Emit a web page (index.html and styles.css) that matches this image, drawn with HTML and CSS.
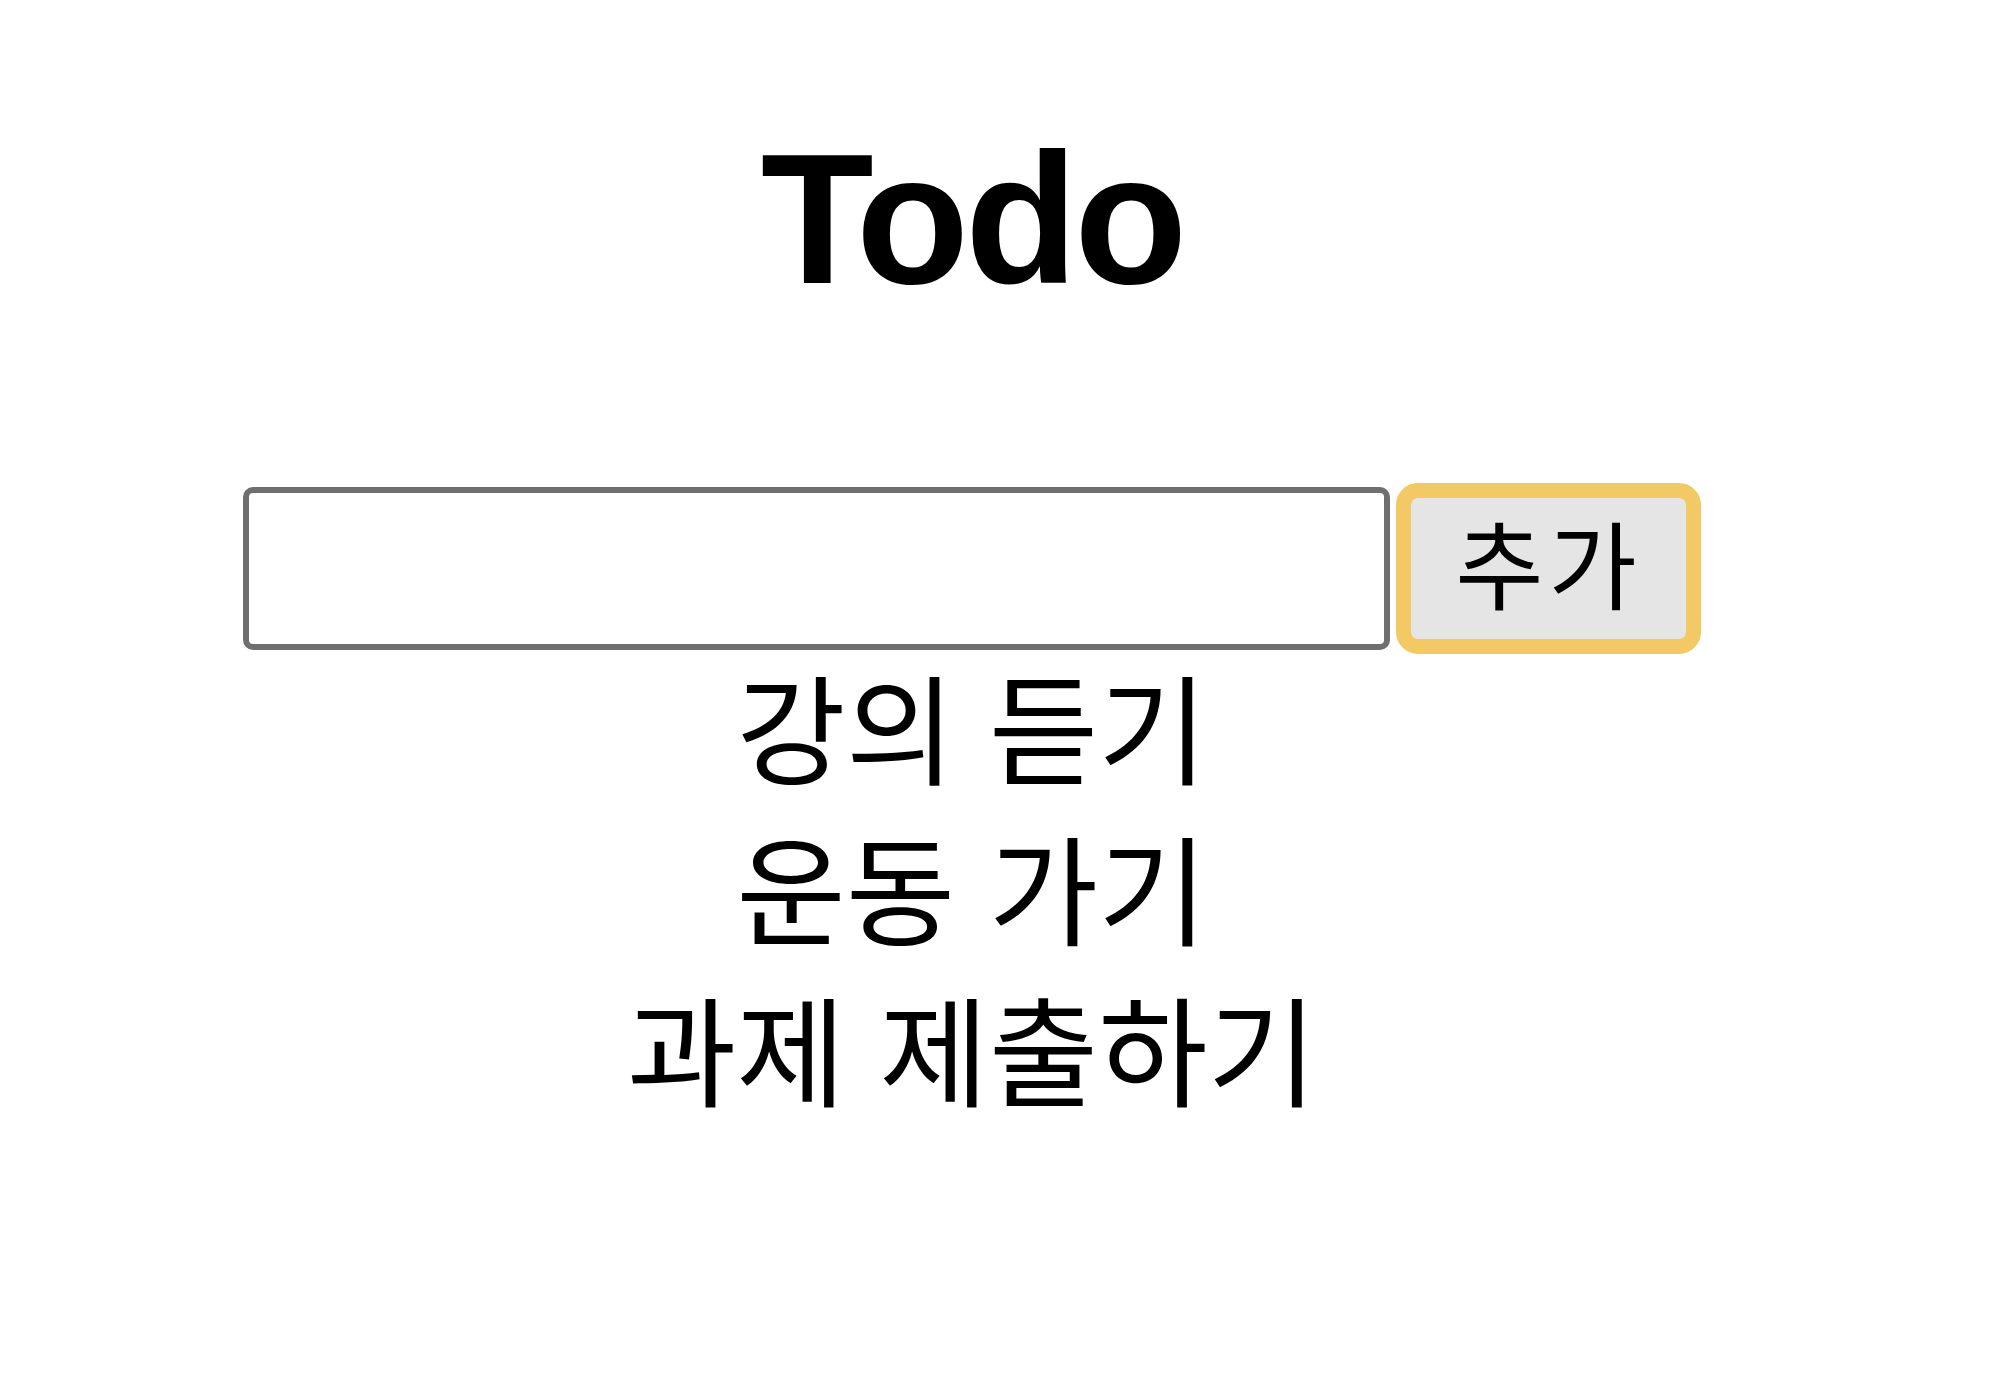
FILE: index.html
```html
<!DOCTYPE html>
<html lang="ko">
<head>
<meta charset="utf-8">
<title>Todo</title>
<link rel="stylesheet" href="styles.css">
</head>
<body>
<div class="app">
  <h1 class="title">Todo</h1>
  <form class="form">
    <input class="field" type="text">
    <button class="add" type="button">추가</button>
  </form>
  <ul class="list">
    <li class="item">강의 듣기</li>
    <li class="item">운동 가기</li>
    <li class="item">과제 제출하기</li>
  </ul>
</div>
</body>
</html>
```
FILE: styles.css
```css
html, body {
  margin: 0;
  padding: 0;
  background: #ffffff;
}
body {
  font-family: "Noto Sans CJK KR", "Noto Sans", sans-serif;
  color: #000000;
}
.app {
  width: 1944px;
  display: flex;
  flex-direction: column;
  align-items: center;
  padding-top: 112px;
}
.title {
  margin: 0;
  font-family: "Liberation Sans", Arial, sans-serif;
  font-weight: 700;
  font-size: 185px;
  line-height: 215px;
  letter-spacing: -4px;
}
.form {
  display: flex;
  align-items: center;
  gap: 6px;
  margin: 156px 0 0 0;
}
.field {
  box-sizing: border-box;
  width: 1147px;
  height: 163px;
  border: 6px solid #6f6f6f;
  border-radius: 10px;
  background: #ffffff;
  padding: 0 20px;
  outline: none;
  font-size: 100px;
}
.add {
  box-sizing: border-box;
  width: 305px;
  height: 171px;
  border: 15px solid #f3c966;
  border-radius: 22px;
  background: #e5e5e5;
  padding: 0 0 16px 0;
  font-family: "Noto Sans CJK KR", "Noto Sans", sans-serif;
  font-size: 96px;
  letter-spacing: 5px;
  color: #000000;
  line-height: 1;
}
.list {
  list-style: none;
  margin: -10px 0 0 0;
  padding: 0;
  text-align: center;
  font-size: 119px;
  line-height: 161px;
  letter-spacing: 0;
}
```
